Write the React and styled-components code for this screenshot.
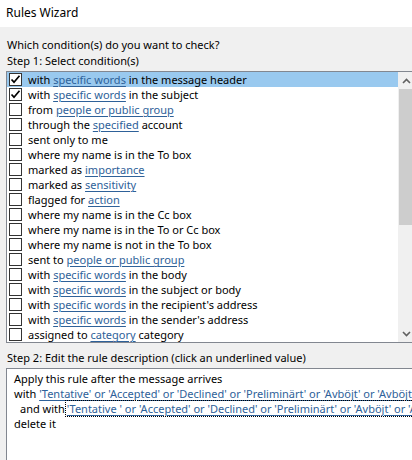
import React from "react";
import styled, { createGlobalStyle } from "styled-components";

const conditions = [
  { checked: true, selected: true, parts: ["with ", { link: "specific words" }, " in the message header"] },
  { checked: true, parts: ["with ", { link: "specific words" }, " in the subject"] },
  { parts: ["from ", { link: "people or public group" }] },
  { parts: ["through the ", { link: "specified" }, " account"] },
  { parts: ["sent only to me"] },
  { parts: ["where my name is in the To box"] },
  { parts: ["marked as ", { link: "importance" }] },
  { parts: ["marked as ", { link: "sensitivity" }] },
  { parts: ["flagged for ", { link: "action" }] },
  { parts: ["where my name is in the Cc box"] },
  { parts: ["where my name is in the To or Cc box"] },
  { parts: ["where my name is not in the To box"] },
  { parts: ["sent to ", { link: "people or public group" }] },
  { parts: ["with ", { link: "specific words" }, " in the body"] },
  { parts: ["with ", { link: "specific words" }, " in the subject or body"] },
  { parts: ["with ", { link: "specific words" }, " in the recipient's address"] },
  { parts: ["with ", { link: "specific words" }, " in the sender's address"] },
  { parts: ["assigned to ", { link: "category" }, " category"] },
];

const words =
  "'Tentative' or 'Accepted' or 'Declined' or 'Preliminärt' or 'Avböjt' or 'Avböjt' or 'Godkänt'";
const words2 =
  "'Tentative ' or 'Accepted' or 'Declined' or 'Preliminärt' or 'Avböjt' or 'Avböjt' or 'Godkänt'";

const GlobalStyle = createGlobalStyle`
  html, body {
    margin: 0;
    padding: 0;
    width: 412px;
    height: 460px;
    overflow: hidden;
    background: #f0f0f0;
  }
  body {
    font-family: "Noto Sans", "Open Sans", sans-serif;
    font-size: 11px;
    color: #000;
  }
`;

const Check = () => (
  <svg width="11" height="11" viewBox="0 0 11 11">
    <path d="M1.5 5.5 L4 8.2 L9.5 1.8" fill="none" stroke="#000" strokeWidth="1.7" />
  </svg>
);

const Chevron = ({ down }) => (
  <svg width="9" height="6" viewBox="0 0 9 6">
    <path
      d={down ? "M1 1 L4.5 4.5 L8 1" : "M1 5 L4.5 1.5 L8 5"}
      fill="none"
      stroke="#606060"
      strokeWidth="1.6"
    />
  </svg>
);

export default function App() {
  return (
    <>
      <GlobalStyle />
      <Window>
        <TitleBar>Rules Wizard</TitleBar>
        <Body>
          <Label $top={10}>Which condition(s) do you want to check?</Label>
          <Label>Step 1: Select condition(s)</Label>
          <ListBox>
            <Rows>
              {conditions.map((c, i) => (
                <Row key={i} $selected={c.selected}>
                  <Box>{c.checked && <Check />}</Box>
                  <RowText>
                    {c.parts.map((p, j) =>
                      typeof p === "string" ? p : <Link key={j}>{p.link}</Link>
                    )}
                  </RowText>
                </Row>
              ))}
            </Rows>
            <ScrollBar>
              <ScrollButton>
                <Chevron />
              </ScrollButton>
              <Thumb />
              <Track />
              <ScrollButton>
                <Chevron down />
              </ScrollButton>
            </ScrollBar>
          </ListBox>
          <Label $top={7}>Step 2: Edit the rule description (click an underlined value)</Label>
          <DescBox>
            <DescLine>Apply this rule after the message arrives</DescLine>
            <DescLine>
              with <Link>{words}</Link>
            </DescLine>
            <DescLine $indent={6}>
              and with<Focused><Link>{words2}</Link></Focused>
            </DescLine>
            <DescLine>delete it</DescLine>
          </DescBox>
        </Body>
      </Window>
    </>
  );
}

const Window = styled.div`
  width: 412px;
  height: 460px;
  display: flex;
  flex-direction: column;
  overflow: hidden;
`;

const TitleBar = styled.div`
  height: 27px;
  flex-shrink: 0;
  background: #fff;
  display: flex;
  align-items: center;
  padding-left: 6px;
  padding-bottom: 3px;
  box-sizing: border-box;
  font-size: 12px;
`;

const Body = styled.div`
  flex: 1;
  display: flex;
  flex-direction: column;
  padding-left: 6px;
  min-height: 0;
`;

const Label = styled.div`
  height: 16px;
  line-height: 16px;
  margin-top: ${(p) => p.$top || 0}px;
  padding-left: 1px;
  white-space: nowrap;
`;

const ListBox = styled.div`
  margin-top: 2px;
  width: 410px;
  flex-shrink: 0;
  border: 1px solid #828790;
  background: #fff;
  display: flex;
`;

const Rows = styled.div`
  width: 391px;
  display: flex;
  flex-direction: column;
`;

const Row = styled.div`
  height: 15px;
  display: flex;
  align-items: center;
  background: ${(p) => (p.$selected ? "#99c9ef" : "transparent")};
  white-space: nowrap;
  overflow: hidden;
`;

const Box = styled.div`
  width: 11px;
  height: 11px;
  margin-left: 2px;
  margin-right: 6px;
  border: 1px solid #333;
  background: #fff;
  display: flex;
  align-items: center;
  justify-content: center;
  flex-shrink: 0;
`;

const RowText = styled.span`
  line-height: 15px;
  height: 15px;
`;

const Link = styled.span`
  color: #2e6199;
  text-decoration: underline;
  text-underline-offset: 2px;
`;

const ScrollBar = styled.div`
  width: 17px;
  background: #f0f0f0;
  display: flex;
  flex-direction: column;
`;

const ScrollButton = styled.div`
  height: 17px;
  display: flex;
  align-items: center;
  justify-content: center;
`;

const Thumb = styled.div`
  height: 136px;
  margin-left: 1px;
  background: #cdcdcd;
`;

const Track = styled.div`
  flex: 1;
`;

const DescBox = styled.div`
  margin-top: 2px;
  width: 420px;
  flex: 1;
  border: 1px solid #828790;
  border-right: none;
  border-bottom: none;
  background: #fff;
  padding: 2px 0 0 7px;
  overflow: hidden;
`;

const DescLine = styled.div`
  height: 15px;
  line-height: 15px;
  white-space: nowrap;
  padding-left: ${(p) => p.$indent || 0}px;
`;

const Focused = styled.span`
  outline: 1px dotted #000;
  outline-offset: -1px;
  padding: 1px 0 1px 2px;
`;
